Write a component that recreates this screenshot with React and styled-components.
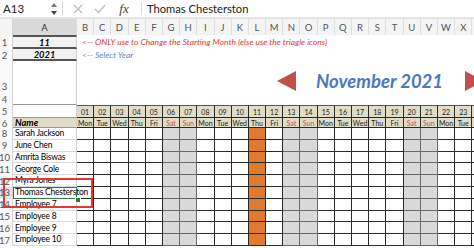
import styled, { createGlobalStyle } from 'styled-components';

const GlobalStyle = createGlobalStyle`
  html, body { margin: 0; padding: 0; background: #fff; overflow: hidden; }
  body { font-family: Lato, 'Liberation Sans', sans-serif; color: #111; }
`;

const ROW_HEAD = 13;
const COL_A = 64;
const COL_W = 17.2;
const DAY_NAMES = ['Mon', 'Tue', 'Wed', 'Thu', 'Fri', 'Sat', 'Sun'];
const LETTERS = 'BCDEFGHIJKLMNOPQRSTUVWXY'.split('');
const DAYS = Array.from({ length: 24 }, (_, i) => i + 1);
const VISIBLE_DAYS = 23;
const HOLIDAY = 11;

const people = [
  { row: 8, name: 'Sarah Jackson' },
  { row: 9, name: 'June Chen' },
  { row: 10, name: 'Amrita Biswas' },
  { row: 11, name: 'George Cole' },
  { row: 12, name: 'Myra Jones' },
  { row: 13, name: 'Thomas Chesterston', selected: true },
  { row: 14, name: 'Employee 7' },
  { row: 15, name: 'Employee 8' },
  { row: 16, name: 'Employee 9' },
  { row: 17, name: 'Employee 10' },
];

const dayName = (d) => DAY_NAMES[(d - 1) % 7];
const isWeekend = (d) => (d - 1) % 7 >= 5;

const Screen = styled.div`
  position: relative;
  width: 474px;
  height: 248px;
  overflow: hidden;
  background: #fff;
`;

const FormulaBar = styled.div`
  display: flex;
  align-items: center;
  height: 17px;
  background: #fff;
`;

const NameBox = styled.div`
  width: 47px;
  padding-left: 3px;
  font-size: 11.5px;
  color: #222;
`;

const Divider = styled.div`
  width: 1px;
  height: 13px;
  background: #dcdcdc;
  margin: 0 ${(p) => p.gap || 4}px 0 4px;
`;

const BarIcon = styled.span`
  display: flex;
  align-items: center;
  justify-content: center;
  width: 22px;
`;

const Fx = styled.span`
  width: 26px;
  text-align: center;
  font-family: 'Liberation Serif', serif;
  font-style: italic;
  font-size: 13px;
  color: #444;
`;

const FormulaText = styled.div`
  font-size: 11.2px;
  color: #222;
  white-space: nowrap;
`;

const BarGap = styled.div`
  height: 2px;
  background: #e4e4e4;
`;

const Sheet = styled.div`
  display: flex;
  flex-direction: column;
`;

const Row = styled.div`
  display: flex;
  height: ${(p) => p.h}px;
  flex-shrink: 0;
`;

const HeaderRow = styled(Row)`
  background: #f4f4f4;
`;

const Corner = styled.div`
  width: ${ROW_HEAD}px;
  flex-shrink: 0;
  border-right: 1px solid #d4d4d4;
  box-sizing: border-box;
`;

const ColHead = styled.div`
  width: ${(p) => p.w}px;
  flex-shrink: 0;
  box-sizing: border-box;
  display: flex;
  align-items: center;
  justify-content: center;
  font-size: 9.5px;
  color: ${(p) => (p.active ? '#333' : '#555')};
  border-right: 1px solid #dedede;
  background: ${(p) => (p.active ? '#d9d9d9' : 'transparent')};
`;

const RowHead = styled.div`
  width: ${ROW_HEAD}px;
  flex-shrink: 0;
  box-sizing: border-box;
  display: flex;
  align-items: ${(p) => (p.bottom ? 'flex-end' : 'center')};
  justify-content: center;
  padding-right: 3px;
  padding-bottom: ${(p) => (p.bottom ? 1 : 0)}px;
  font-size: 9.5px;
  color: #555;
  background: ${(p) => (p.active ? '#e2e2e2' : '#fafafa')};
  border-right: 1px solid #d4d4d4;
  white-space: nowrap;
`;

const ACell = styled.div`
  width: ${COL_A}px;
  flex-shrink: 0;
  box-sizing: border-box;
  display: flex;
  align-items: ${(p) => (p.name ? 'flex-end' : 'center')};
  justify-content: ${(p) => (p.center ? 'center' : 'flex-start')};
  padding-left: ${(p) => (p.center ? 0 : 2)}px;
  font-size: ${(p) => (p.name ? 8.5 : 9.3)}px;
  line-height: ${(p) => (p.name ? '9.5px' : 'normal')};
  letter-spacing: ${(p) => (p.name ? -0.22 : 0)}px;
  color: #000;
  white-space: nowrap;
  background: ${(p) => p.bg || '#fff'};
  border-right: 1px solid #d0d0d0;
  border-top: ${(p) => p.top || 'none'};
  border-bottom: ${(p) => p.bottom || 'none'};
  font-weight: ${(p) => (p.bold ? 700 : 400)};
  font-style: ${(p) => (p.italic ? 'italic' : 'normal')};
  outline: ${(p) => (p.selected ? '1.5px solid #2f7a4b' : 'none')};
  outline-offset: -1.5px;
  position: relative;
  z-index: ${(p) => (p.selected ? 2 : 0)};
`;

const Rest = styled.div`
  flex: 1;
  display: flex;
  align-items: center;
  min-width: 0;
`;

const Note = styled.span`
  padding-left: 5px;
  font-size: 8.5px;
  font-style: italic;
  white-space: nowrap;
  color: ${(p) => p.color};
`;

const TitleBar = styled(Rest)`
  padding-left: 200px;
  padding-top: 8px;
`;

const Arrow = styled.div`
  width: 0;
  height: 0;
  flex-shrink: 0;
  border-top: 10px solid transparent;
  border-bottom: 10px solid transparent;
  ${(p) => (p.dir === 'left' ? 'border-right' : 'border-left')}: 19px solid #c0504d;
`;

const Title = styled.div`
  margin: 0 22px 0 20px;
  font-size: 18.5px;
  font-weight: 700;
  font-style: italic;
  color: #4a78c2;
  white-space: nowrap;
`;

const tones = {
  head: '#e0dcc8',
  weekend: '#d9d9d9',
  holiday: '#e07a2e',
  plain: '#fff',
};

const DayCell = styled.div`
  width: ${COL_W}px;
  flex-shrink: 0;
  box-sizing: border-box;
  display: flex;
  align-items: center;
  justify-content: center;
  font-size: 7px;
  color: ${(p) => (p.red ? '#c0504d' : '#222')};
  background: ${(p) => tones[p.tone]};
  border-right: 1.3px solid ${(p) => (p.tone === 'weekend' ? '#6a6a6a' : '#2a2a2a')};
  border-bottom: 1.3px solid ${(p) => (p.tone === 'weekend' ? '#6a6a6a' : '#2a2a2a')};
  border-top: ${(p) => (p.first ? '1px solid #555' : 'none')};
`;

const SelectionFrame = styled.div`
  position: absolute;
  left: 3px;
  top: 178px;
  width: 90px;
  height: 30px;
  box-sizing: border-box;
  border: 2px solid #e2392f;
  z-index: 5;
  pointer-events: none;
`;

const FillHandle = styled.div`
  position: absolute;
  left: 75px;
  top: 197px;
  width: 4px;
  height: 4px;
  background: #2f7a4b;
  border: 1px solid #fff;
  z-index: 4;
`;

const Spinner = () => (
  <svg width="8" height="14" viewBox="0 0 8 14">
    <path d="M4 1 L7 5 L1 5 Z" fill="#777" />
    <path d="M4 13 L7 9 L1 9 Z" fill="#444" />
  </svg>
);

const Cross = () => (
  <svg width="10" height="10" viewBox="0 0 10 10">
    <path d="M1 1 L9 9 M9 1 L1 9" stroke="#bdbdbd" strokeWidth="1.2" />
  </svg>
);

const Check = () => (
  <svg width="12" height="10" viewBox="0 0 12 10">
    <path d="M1 5 L4.5 8.5 L11 1" stroke="#bdbdbd" strokeWidth="1.2" fill="none" />
  </svg>
);

const App = () => {
  return (
    <Screen>
      <GlobalStyle />
      <FormulaBar>
        <NameBox>A13</NameBox>
        <Spinner />
        <Divider />
        <BarIcon>
          <Cross />
        </BarIcon>
        <BarIcon>
          <Check />
        </BarIcon>
        <Fx>fx</Fx>
        <Divider gap={5} />
        <FormulaText>Thomas Chesterston</FormulaText>
      </FormulaBar>
      <BarGap />

      <Sheet>
        <HeaderRow h={16}>
          <Corner />
          <ColHead w={COL_A} active>
            A
          </ColHead>
          {LETTERS.map((l, i) => (
            <ColHead key={l} w={COL_W}>
              {i < VISIBLE_DAYS ? l : ''}
            </ColHead>
          ))}
        </HeaderRow>

        <Row h={14}>
          <RowHead>1</RowHead>
          <ACell center bold italic bg="#f2f2f2" top="2px solid #555" bottom="2px solid #555">
            11
          </ACell>
          <Rest>
            <Note color="#e2392f">
              {'<-- ONLY use to Change the Starting Month (else use the triagle icons)'}
            </Note>
          </Rest>
        </Row>
        <Row h={12}>
          <RowHead>2</RowHead>
          <ACell center bold italic bg="#f2f2f2" bottom="2px solid #555">
            2021
          </ACell>
          <Rest>
            <Note color="#5a88cc">{'<-- Select Year'}</Note>
          </Rest>
        </Row>
        <Row h={32}>
          <RowHead bottom>3</RowHead>
          <ACell />
          <TitleBar>
            <Arrow dir="left" />
            <Title>November 2021</Title>
            <Arrow dir="right" />
          </TitleBar>
        </Row>
        <Row h={12}>
          <RowHead>4</RowHead>
          <ACell bottom="1px solid #999" />
          <Rest />
        </Row>
        <Row h={13}>
          <RowHead>5</RowHead>
          <ACell bottom="1px solid #999" />
          {DAYS.map((d) => (
            <DayCell key={d} tone="head" first>
              {d <= VISIBLE_DAYS ? String(d).padStart(2, '0') : ''}
            </DayCell>
          ))}
        </Row>
        <Row h={10}>
          <RowHead>6</RowHead>
          <ACell bold italic bg="#e0dcc8" bottom="1px solid #999">
            Name
          </ACell>
          {DAYS.map((d) => (
            <DayCell key={d} tone="head" red={isWeekend(d)}>
              {d <= VISIBLE_DAYS ? dayName(d) : ''}
            </DayCell>
          ))}
        </Row>

        {people.map((p) => (
          <Row key={p.row} h={11.8}>
            <RowHead active={p.selected}>{p.row}</RowHead>
            <ACell name selected={p.selected} bottom="1px solid #d8d8d8">
              {p.name}
            </ACell>
            {DAYS.map((d) => (
              <DayCell
                key={d}
                tone={d === HOLIDAY ? 'holiday' : isWeekend(d) ? 'weekend' : 'plain'}
              />
            ))}
          </Row>
        ))}
      </Sheet>

      <SelectionFrame />
      <FillHandle />
    </Screen>
  );
};

export default App;
